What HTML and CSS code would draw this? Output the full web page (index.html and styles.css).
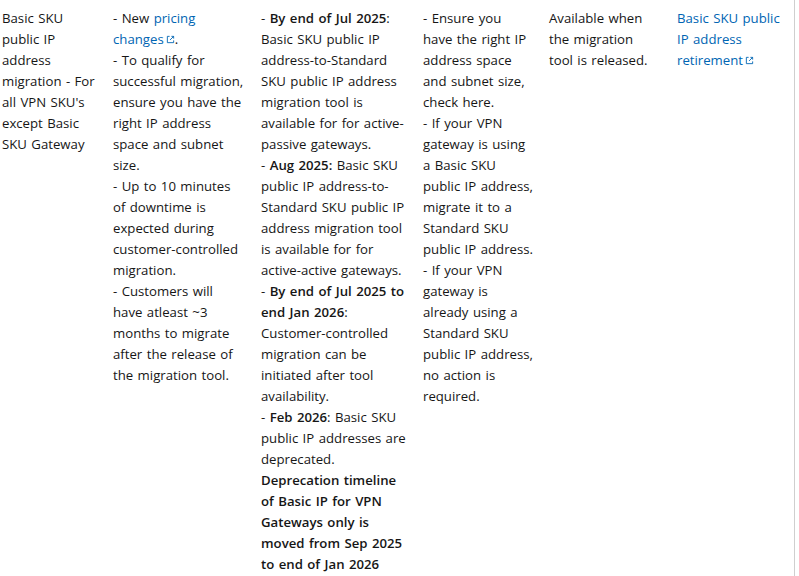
FILE: index.html
```html
<!DOCTYPE html>
<html lang="en">
<head>
<meta charset="utf-8">
<title>Basic SKU public IP address migration</title>
<link rel="stylesheet" href="styles.css">
</head>
<body>
<div class="wrap">
<table class="tbl">
<colgroup>
<col class="c1"><col class="c2"><col class="c3"><col class="c4"><col class="c5"><col class="c6">
</colgroup>
<tbody>
<tr>
<td class="d1">Basic SKU public IP address migration - For all VPN SKU's except Basic SKU Gateway</td>
<td class="d2">- New <a href="#">pricing changes<svg class="ext" viewBox="0 0 10 10" width="10" height="10"><path d="M4 1.5H1.5v7h7V6" fill="none" stroke="currentColor" stroke-width="1"/><path d="M6 1.5h2.5V4M8.5 1.5L4.5 5.5" fill="none" stroke="currentColor" stroke-width="1"/></svg></a>.<br>- To qualify for successful migration, ensure you have the right IP address space and subnet size.<br>- Up to 10 minutes of downtime is expected during customer-controlled migration.<br>- Customers will have atleast ~3 months to migrate after the release of the migration tool.</td>
<td class="d3">- <b>By end of Jul 2025</b>: Basic SKU public IP address-to-Standard SKU public IP address migration tool is available for for active-passive gateways.<br>- <b>Aug 2025:</b> Basic SKU public IP address-to-Standard SKU public IP address migration tool is available for for active-active gateways.<br>- <b>By end of Jul 2025 to end Jan 2026</b>: Customer-controlled migration can be initiated after tool availability.<br>- <b>Feb 2026</b>: Basic SKU public IP addresses are deprecated.<br><b>Deprecation timeline of Basic IP for VPN Gateways only is moved from Sep 2025 to end of Jan 2026</b></td>
<td class="d4">- Ensure you have the right IP address space and subnet size, check here.<br>- If your VPN gateway is using a Basic SKU public IP address, migrate it to a Standard SKU public IP address.<br>- If your VPN gateway is already using a Standard SKU public IP address, no action is required.</td>
<td class="d5">Available when the migration tool is released.</td>
<td class="d6"><a href="#">Basic SKU public IP address retirement<svg class="ext" viewBox="0 0 10 10" width="10" height="10"><path d="M4 1.5H1.5v7h7V6" fill="none" stroke="currentColor" stroke-width="1"/><path d="M6 1.5h2.5V4M8.5 1.5L4.5 5.5" fill="none" stroke="currentColor" stroke-width="1"/></svg></a></td>
</tr>
</tbody>
</table>
</div>
</body>
</html>
```
FILE: styles.css
```css
html, body {
  margin: 0;
  padding: 0;
  background: #ffffff;
  overflow: hidden;
}
body {
  font-family: "Open Sans", "Noto Sans", "Liberation Sans", sans-serif;
  font-size: 13.2px;
  line-height: 21px;
  word-spacing: 1px;
  color: #161616;
  height: 576px;
}
.wrap {
  width: 794px;
  height: 576px;
  border-right: 1px solid #cfcfcf;
  overflow: hidden;
}
.tbl {
  border-collapse: collapse;
  table-layout: fixed;
  width: 794px;
}
.c1 { width: 105px; }
.c2 { width: 148px; }
.c3 { width: 162px; }
.c4 { width: 126px; }
.c5 { width: 128px; }
.c6 { width: 125px; }
.tbl td {
  vertical-align: top;
  padding: 8px 8px 8px 8px;
  word-wrap: break-word;
}
.tbl td.d1 { padding-left: 2px; }
.tbl td.d3 { padding-right: 7px; }
.tbl td.d4 { padding-right: 6.5px; }
.tbl td.d5 { padding-right: 9px; }
.tbl b {
  font-weight: 600;
}
.tbl a {
  color: #0065b3;
  text-decoration: none;
}
.ext {
  width: 9px;
  height: 9px;
  margin-left: 2px;
  vertical-align: 0;
}
```
